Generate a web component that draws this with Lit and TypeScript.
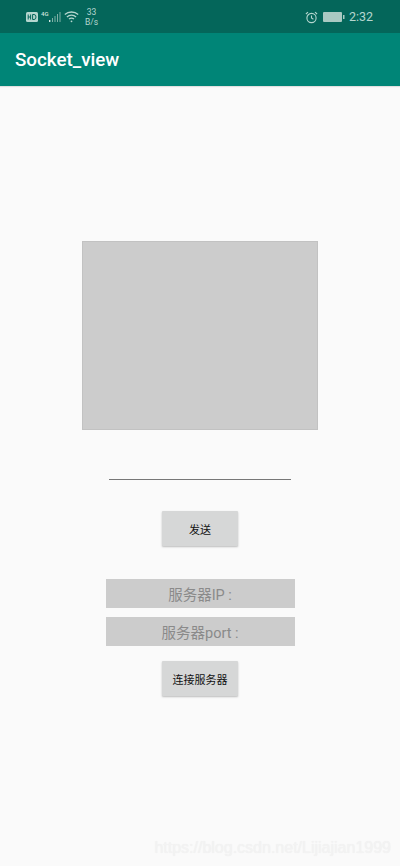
import { LitElement, html, css } from "lit";
import { customElement } from "lit/decorators.js";

@customElement("app-root")
export class AppRoot extends LitElement {
  static styles = css`
    :host { display: block; position: relative; width: 400px; height: 866px; overflow: hidden; background: #fafafa;
      font-family: Roboto, "Noto Sans CJK SC", sans-serif; }
    .status { height: 33px; box-sizing: border-box; background: #04665a; color: #b5d6cf; display: flex; align-items: center;
      justify-content: space-between; padding: 0 27px 0 26px; }
    .left, .right { display: flex; align-items: center; }
    .hd { margin-right: 3px; }
    .net { font-size: 6px; line-height: 6px; font-weight: 500; align-self: flex-start; margin-top: 4px; width: 8px; color: #cfe3de; }
    .signal { margin-top: 1px; }
    .wifi { margin-left: 3px; }
    .speed { font-size: 8.5px; line-height: 10px; text-align: center; margin-left: 6px; }
    .alarm { margin-top: 1px; }
    .battery { margin-left: 5px; margin-top: 1px; }
    .clock { font-size: 12.5px; margin-left: 4px; }
    .appbar { height: 53px; box-sizing: border-box; background: #008577; color: #fff; font-size: 18.8px; font-weight: 500;
      padding: 0 15px; display: flex; align-items: center; box-shadow: 0 1px 1px rgba(0,0,0,.1); position: relative; }
    main { display: flex; flex-direction: column; align-items: center; padding-top: 155px; }
    .image { width: 236px; height: 189px; box-sizing: border-box; background: #cccccc; border: 1px solid #c2c2c2; }
    .line { width: 182px; height: 1px; background: #777; margin-top: 49px; }
    .btn { width: 76px; height: 35px; background: #d6d7d7; color: #111; font-size: 11px; display: flex; align-items: center;
      justify-content: center; box-shadow: 0 1px 2px rgba(0,0,0,.25); border-radius: 1px; }
    .send { margin-top: 31px; }
    .field { width: 189px; height: 29px; background: #cccccc; color: #8a8a8a; font-size: 14.5px; display: flex; align-items: center;
      justify-content: center; }
    .ip { margin-top: 33px; }
    .port { margin-top: 9px; }
    .connect { margin-top: 15px; }
    .mark { position: absolute; right: 9px; bottom: 9px; font-size: 16px; font-family: "Liberation Sans", sans-serif; color: #f3f3f3;
      text-shadow: 0 0 1px #ececec; }
  `;

  render() {
    return html`
      <div class="status">
        <div class="left">
          <svg class="hd" width="12" height="10" viewBox="0 0 12 10">
            <rect width="12" height="10" rx="1.5" fill="#b5d6cf"/>
            <path d="M2.2 2.5v5M2.2 5h2.4M4.6 2.5v5M6.6 2.5v5h1.4q2 0 2-2.5t-2-2.5z" fill="none" stroke="#04665a" stroke-width="1"/>
          </svg>
          <span class="net">4G</span>
          <svg class="signal" width="12" height="12" viewBox="0 0 12 12">
            <rect x="0" y="9" width="1.4" height="2" fill="#d5e8e4"/>
            <rect x="3" y="7" width="1" height="4" fill="#7fb0a6"/>
            <rect x="5.5" y="5" width="1" height="6" fill="#7fb0a6"/>
            <rect x="8" y="3" width="1" height="8" fill="#7fb0a6"/>
            <rect x="10.5" y="1" width="1" height="10" fill="#7fb0a6"/>
          </svg>
          <svg class="wifi" width="15" height="12" viewBox="0 0 15 12" fill="none" stroke="#b5d6cf" stroke-width="1.3">
            <path d="M.8 3.6a10 10 0 0 1 13.4 0"/>
            <path d="M2.9 5.9a7 7 0 0 1 9.2 0"/>
            <path d="M5 8.1a4 4 0 0 1 5 0"/>
            <circle cx="7.5" cy="10.3" r=".9" fill="#b5d6cf" stroke="none"/>
          </svg>
          <div class="speed">33<br />B/s</div>
        </div>
        <div class="right">
          <svg class="alarm" width="13" height="13" viewBox="0 0 13 13" fill="none" stroke="#b5d6cf" stroke-width="1.1">
            <circle cx="6.5" cy="7" r="4.6"/>
            <path d="M6.5 4.4V7l1.9 1.2M.9 3 3 1.1M12.1 3 10 1.1"/>
          </svg>
          <svg class="battery" width="22" height="10" viewBox="0 0 22 10">
            <rect x="0" y="0" width="19" height="10" rx="1" fill="#a9c9c2"/>
            <rect x="20" y="3" width="1.5" height="4" fill="#a9c9c2"/>
          </svg>
          <span class="clock">2:32</span>
        </div>
      </div>
      <div class="appbar">Socket_view</div>
      <main>
        <div class="image"></div>
        <div class="line"></div>
        <div class="btn send">发送</div>
        <div class="field ip">服务器IP :</div>
        <div class="field port">服务器port :</div>
        <div class="btn connect">连接服务器</div>
      </main>
      <div class="mark">https://blog.csdn.net/Lijiajian1999</div>
    `;
  }
}
